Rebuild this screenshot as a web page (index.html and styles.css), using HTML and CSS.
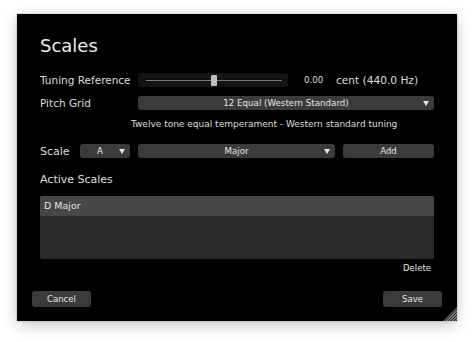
FILE: index.html
```html
<!DOCTYPE html>
<html>
<head>
<meta charset="utf-8">
<link rel="stylesheet" href="styles.css">
</head>
<body>
<div class="dialog">
  <div class="content">
    <h1 class="title">Scales</h1>
    <div class="row row-tuning">
      <span class="label">Tuning Reference</span>
      <div class="slider"><div class="track"></div><div class="thumb"></div></div>
      <span class="value">0.00</span>
      <span class="unit">cent (440.0 Hz)</span>
    </div>
    <div class="row row-grid">
      <span class="label">Pitch Grid</span>
      <div class="select select-grid"><span class="sel-text">12 Equal (Western Standard)</span><span class="arrow"></span></div>
    </div>
    <div class="desc">Twelve tone equal temperament - Western standard tuning</div>
    <div class="row row-scale">
      <span class="label label-scale">Scale</span>
      <div class="select select-key"><span class="sel-text">A</span><span class="arrow"></span></div>
      <div class="select select-mode"><span class="sel-text">Major</span><span class="arrow"></span></div>
      <div class="btn btn-add">Add</div>
    </div>
    <div class="section-label">Active Scales</div>
    <div class="list">
      <div class="list-item selected">D Major</div>
    </div>
    <div class="delete-row"><span class="link">Delete</span></div>
  </div>
  <div class="footer">
    <div class="btn btn-foot">Cancel</div>
    <div class="btn btn-foot">Save</div>
  </div>
  <div class="grip"></div>
</div>
</body>
</html>
```
FILE: styles.css
```css
html, body {
  margin: 0;
  padding: 0;
  background: #ffffff;
}
body {
  width: 474px;
  height: 342px;
  overflow: hidden;
  font-family: "DejaVu Sans", Verdana, sans-serif;
  font-size: 10.5px;
  color: #dedede;
}
.dialog {
  position: relative;
  margin: 14px 0 0 17px;
  width: 440px;
  height: 307px;
  background: #000;
  box-shadow: 0 4px 14px rgba(0,0,0,0.22), 0 0 2px rgba(0,0,0,0.25);
  box-sizing: border-box;
}
.content {
  padding: 0 23px 0 23px;
}
.title {
  margin: 0;
  padding-top: 20px;
  height: 32px;
  font-weight: normal;
  font-size: 18px;
  line-height: 24px;
  color: #ececec;
}
.row {
  display: flex;
  align-items: center;
}
.label {
  width: 98px;
  flex: none;
  white-space: nowrap;
}
.row-tuning {
  margin-top: 7px;
  height: 14px;
}
.slider {
  position: relative;
  width: 150px;
  height: 14px;
  background: #141414;
  border-radius: 3px;
  flex: none;
}
.track {
  position: absolute;
  left: 8px;
  right: 6px;
  top: 7px;
  height: 1px;
  background: #7a7a7a;
}
.thumb {
  position: absolute;
  left: 73px;
  top: 2px;
  width: 6px;
  height: 11px;
  border-radius: 1px;
  background: #bdbdbd;
}
.value {
  margin-left: 16px;
  width: 32px;
  font-size: 8.7px;
}
.unit {
  font-size: 10.6px;
}
.row-grid {
  margin-top: 9px;
  height: 14px;
}
.select {
  position: relative;
  height: 14px;
  background: #3b3b3b;
  border-radius: 3px;
  display: flex;
  align-items: center;
  justify-content: center;
  box-sizing: border-box;
  flex: none;
}
.sel-text {
  font-size: 8.7px;
  color: #e4e4e4;
}
.arrow {
  position: absolute;
  right: 5px;
  top: 5px;
  width: 0;
  height: 0;
  border-left: 3px solid transparent;
  border-right: 3px solid transparent;
  border-top: 5px solid #e8e8e8;
}
.select-grid {
  width: 296px;
}
.desc {
  margin-top: 7px;
  margin-left: 91px;
  height: 14px;
  line-height: 14px;
  font-size: 9px;
  white-space: nowrap;
}
.row-scale {
  margin-top: 13px;
  height: 14px;
}
.label-scale {
  width: 40px;
  font-size: 11px;
}
.select-key {
  width: 50px;
  justify-content: flex-start;
  padding-left: 17px;
}
.select-mode {
  width: 197px;
  margin-left: 8px;
}
.btn {
  height: 16px;
  background: #3b3b3b;
  border-radius: 3px;
  display: flex;
  align-items: center;
  justify-content: center;
  font-size: 8.5px;
  color: #e4e4e4;
  flex: none;
}
.btn-add {
  width: 91px;
  height: 14px;
  margin-left: 8px;
}
.section-label {
  margin-top: 15px;
  height: 14px;
  line-height: 14px;
  font-size: 11px;
}
.list {
  margin-top: 9px;
  width: 394px;
  height: 63px;
  background: #2a2a2a;
  border-radius: 2px;
  overflow: hidden;
}
.list-item {
  height: 20px;
  line-height: 20px;
  padding-left: 4px;
  font-size: 9.5px;
  color: #e2e2e2;
}
.list-item.selected {
  background: #474747;
}
.delete-row {
  display: flex;
  justify-content: flex-end;
  width: 391px;
  margin-top: 2px;
  height: 14px;
  line-height: 14px;
}
.link {
  font-size: 8.5px;
  color: #e4e4e4;
}
.footer {
  display: flex;
  justify-content: space-between;
  padding: 0 15px;
  margin-top: 16px;
}
.btn-foot {
  width: 59px;
}
.grip {
  position: absolute;
  right: 0;
  bottom: 0;
  width: 14px;
  height: 14px;
  background: repeating-linear-gradient(135deg, #777 0 1px, #222 1px 2px);
  clip-path: polygon(100% 0, 100% 100%, 0 100%);
}
```
